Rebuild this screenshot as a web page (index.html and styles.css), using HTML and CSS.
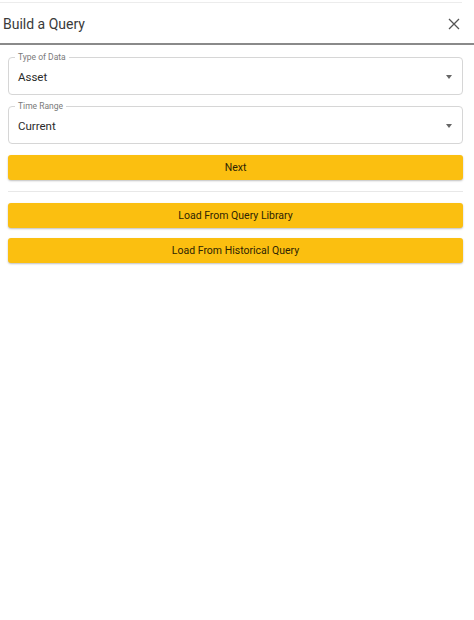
FILE: index.html
```html
<!DOCTYPE html>
<html lang="en">
  <head>
    <meta charset="UTF-8" />
    <meta name="viewport" content="width=device-width, initial-scale=1.0" />
    <title>Build a Query</title>
    <link rel="stylesheet" href="styles.css">
  </head>
  <body>
    <div class="dialog">
      <div class="top-line"></div>
      <div class="header">
        <div class="title">Build a Query</div>
        <button class="close" aria-label="Close">
          <svg width="12" height="12" viewBox="0 0 12 12">
            <path d="M1 1 L11 11 M11 1 L1 11" stroke="#555" stroke-width="1.3" fill="none" />
          </svg>
        </button>
      </div>
      <div class="content">
        <div class="field">
          <div class="label">Type of Data</div>
          <div class="value">Asset</div>
          <div class="arrow"></div>
        </div>
        <div class="field">
          <div class="label">Time Range</div>
          <div class="value">Current</div>
          <div class="arrow"></div>
        </div>
        <button class="btn">Next</button>
        <div class="divider"></div>
        <button class="btn">Load From Query Library</button>
        <button class="btn">Load From Historical Query</button>
      </div>
    </div>
  </body>
</html>
```
FILE: styles.css
```css
* {
  box-sizing: border-box;
  margin: 0;
  padding: 0;
}
body {
  font-family: Roboto, "Liberation Sans", sans-serif;
  background: #fff;
  color: #333;
}
.dialog {
  width: 474px;
  height: 620px;
}
.top-line {
  height: 1px;
  margin-top: 2px;
  margin-right: 12px;
  background: #ececec;
}
.header {
  height: 42px;
  display: flex;
  align-items: center;
  justify-content: space-between;
  padding: 1px 14px 0 3px;
  border-bottom: 2px solid #8a8a8a;
}
.title {
  font-size: 14px;
  color: #3a3a3a;
}
.close {
  border: none;
  background: none;
  width: 12px;
  height: 12px;
  display: flex;
  cursor: pointer;
}
.content {
  padding: 12px 11px 0 8px;
  display: flex;
  flex-direction: column;
}
.field {
  position: relative;
  height: 38px;
  border: 1px solid #d6d6d6;
  border-radius: 4px;
  margin-bottom: 11px;
  display: flex;
  align-items: center;
  padding: 1px 9px 0;
}
.label {
  position: absolute;
  top: -6px;
  left: 6px;
  background: #fff;
  padding: 0 3px;
  font-size: 8.5px;
  line-height: 10px;
  color: #7a7a7a;
}
.value {
  font-size: 11.5px;
  color: #2b2b2b;
}
.arrow {
  position: absolute;
  right: 10px;
  top: 17px;
  width: 0;
  height: 0;
  border-left: 3.5px solid transparent;
  border-right: 3.5px solid transparent;
  border-top: 4px solid #666;
}
.btn {
  height: 25px;
  border: none;
  border-radius: 3px;
  background: #fbbf10;
  color: #2e2404;
  font-family: Roboto, "Liberation Sans", sans-serif;
  font-size: 10.5px;
  font-weight: 400;
  box-shadow: 0 1px 2px rgba(0, 0, 0, 0.25);
  cursor: pointer;
}
.divider {
  height: 1px;
  background: #e8e8e8;
  margin: 11px 0;
}
.btn + .btn {
  margin-top: 10px;
}
```
